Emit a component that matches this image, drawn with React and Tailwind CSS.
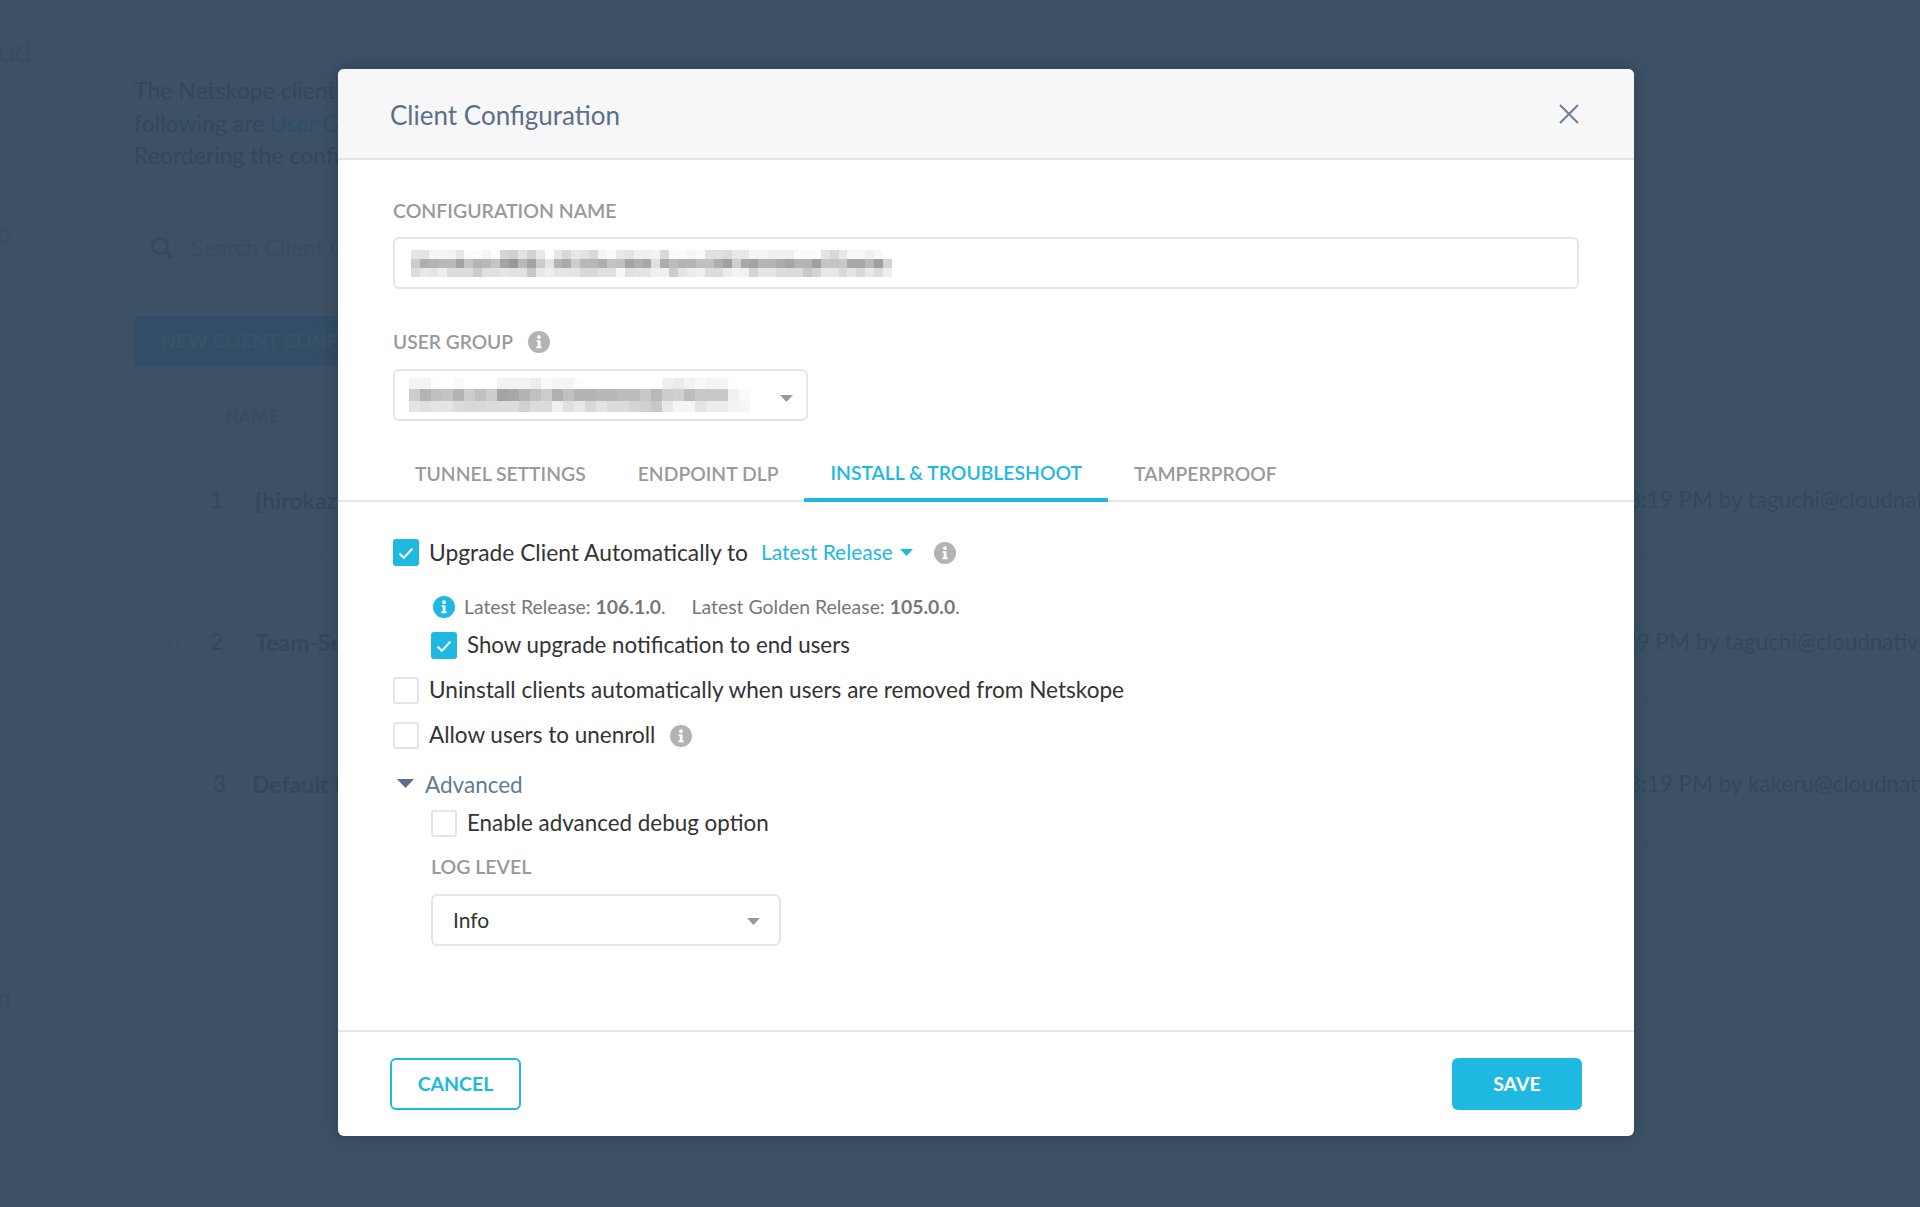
import React from "react";

const nameMosaic = [
  "e4 e4 f5 f5 f3 e6 fc fb f5 fe d4 d0 e2 d2 e8 ff e8 d8 e8 e2 d8 f4 fb e8 e4 f0 f0 f4 d8 fb fa f4 fb e0 e0 dc e8 e8 f6 f4 f0 f0 f0 fb fb fb e4 d8 e8 f8 f8 f0 f8 ff",
  "cc ae b4 b8 b8 a2 c4 b4 b8 c4 a4 98 b8 a4 cc e4 b4 aa cc b8 b8 ae c4 c0 a4 b0 a8 e0 ac bc b4 b4 c0 c0 ae a0 d0 a8 a4 b4 b4 ac a4 b4 b4 a0 c4 c4 c8 a8 a8 b8 a0 d4",
  "dc e8 e4 ee dc dc dc cc e0 e0 e6 e2 e2 c8 e8 ee e6 e6 e4 d8 d8 e0 e0 f6 e0 e4 e4 f0 f0 cc e4 ec f0 dc dc ec f4 f2 d4 e4 e4 dc dc dc c8 d4 e8 e8 d8 e4 d8 e8 dc ee",
];

const groupMosaic = [
  "f4 f4 fe ff fa ff ff ff f2 f2 f2 ec fa f6 f4 fc ff ff ff ff ff ff ff f0 ea f2 f8 f4 f4 fe ff",
  "cc b4 c0 c4 b4 cc c0 cc a4 a8 b4 c0 cc b0 c0 b4 b4 b8 b8 bc bc c8 b8 cc d0 bc c8 c8 c8 f0 fa",
  "e4 e0 e4 e4 dc d8 d8 dc dc dc d0 dc dc f0 e0 e8 d8 e4 dc dc d4 d0 c8 e8 f4 f4 e4 ec ec f4 f6",
];

// redacted text, drawn as blocks
function Mosaic({ rows, cell, rowH }) {
  return (
    <div className="flex flex-col">
      {rows.map((row, i) => (
        <div key={i} className="flex">
          {row.split(" ").map((c, j) => (
            <div key={j} style={{ width: cell, height: rowH, background: "#" + c + c + c }} />
          ))}
        </div>
      ))}
    </div>
  );
}

function InfoIcon({ color = "#b3b3b3", size = 22 }) {
  return (
    <svg width={size} height={size} viewBox="0 0 22 22" className="shrink-0">
      <circle cx="11" cy="11" r="11" fill={color} />
      <circle cx="11" cy="6.2" r="1.9" fill="#fff" />
      <path d="M8.6 9.3h3.9v6.2h1.3v1.7H8.3v-1.7h1.4v-4.5H8.6z" fill="#fff" />
    </svg>
  );
}

function Caret({ className, w = 13, h = 7, color = "#999" }) {
  return (
    <svg width={w} height={h} viewBox="0 0 13 7" className={className}>
      <path d="M0 0h13L6.5 7z" fill={color} />
    </svg>
  );
}

function Checkbox({ checked }) {
  if (checked) {
    return (
      <div className="flex h-[27px] w-[26px] shrink-0 items-center justify-center rounded-[3px] bg-[#1eb8e0]">
        <svg width="16" height="14" viewBox="0 0 16 14">
          <path d="M1.5 7.5l4.3 4.4L14.5 2.5" fill="none" stroke="#fff" strokeWidth="2" />
        </svg>
      </div>
    );
  }
  return <div className="h-[27px] w-[26px] shrink-0 rounded-[3px] border-2 border-[#e5e5e5] bg-white" />;
}

function CheckRow({ checked, label, top, size = "text-[22.5px]", children }) {
  return (
    <div className={`flex h-[27px] items-center ${top}`}>
      <Checkbox checked={checked} />
      <span className={`ml-[10px] whitespace-nowrap pb-[1px] text-[#333] ${size}`}>{label}</span>
      {children}
    </div>
  );
}

function DragDots() {
  return (
    <div className="grid w-[13px] grid-cols-2 gap-x-[7px] gap-y-[4px]">
      {[0, 1, 2, 3, 4, 5].map((i) => (
        <div key={i} className="h-[3px] w-[3px] bg-[#364d62]" />
      ))}
    </div>
  );
}

function BackgroundRow({ num, name, right, nameW, numClass, dots }) {
  return (
    <div className="flex h-[142px] items-start border-b border-[#394e63] pt-[67px] text-[22.5px] leading-[32px] text-[#31485c]">
      <div className="ml-[33px] flex h-[32px] w-[27px] shrink-0 items-center">{dots && <DragDots />}</div>
      <div className={`shrink-0 ${numClass}`}>{num}</div>
      <div className="shrink-0 text-[23px] font-bold" style={{ width: nameW }}>{name}</div>
      <div className="shrink-0">{right}</div>
    </div>
  );
}

function Background() {
  return (
    <div className="flex h-full w-full whitespace-nowrap">
      <div className="w-[82px] shrink-0 border-r border-[#394e63] text-[#354c61]">
        <div className="-ml-[46px] mt-[32px] text-[30px] leading-[36px]">Cloud</div>
        <div className="mt-[155px] flex h-[24px] items-center gap-[8px] text-[20px]">
          <span className="-ml-[3px] w-[15px] overflow-hidden">G</span>
          <span className="h-px w-[26px] bg-[#394e63]" />
        </div>
        <div className="mt-[404px] flex h-[24px] items-center gap-[8px] text-[20px]">
          <span className="-ml-[8px] w-[10px] overflow-hidden">r</span>
          <span className="ml-[4px] h-px w-[34px] bg-[#394e63]" />
        </div>
        <div className="-ml-[16px] mt-[308px] text-[24px] leading-[28px]">on</div>
      </div>
      <div className="flex-1 pl-[52px]">
        <div className="mt-[74px] text-[23px] leading-[32.5px] text-[#31485c]">
          <div>The Netskope client is configured</div>
          <div>following are <span className="text-[#2f4d68]">User Groups</span></div>
          <div>Reordering the configurations</div>
        </div>
        <div className="mt-[51px] flex h-[50px] w-[500px] items-center rounded-[4px] border border-[#3a4f64] pl-[15px]">
          <svg width="24" height="24" viewBox="0 0 24 24" className="shrink-0">
            <circle cx="10" cy="10" r="7.5" fill="none" stroke="#334a5f" strokeWidth="3" />
            <path d="M15.5 15.5L22 22" stroke="#334a5f" strokeWidth="3.5" />
          </svg>
          <span className="ml-[17px] text-[23px] text-[#354c61]">Search Client Configurations</span>
        </div>
        <div className="mt-[43px] flex h-[50px] w-[400px] items-center rounded-[4px] bg-[#324d66] pl-[27px] text-[19.5px] font-bold text-[#3b5168]">
          NEW CLIENT CONFIGURATION
        </div>
        <div className="mt-[38px] pl-[91px] text-[18px] font-bold leading-[24px] text-[#354c61]">NAME</div>
        <div className="-mt-[11px]">
          <BackgroundRow dots num="1" numClass="w-[61px] pl-[16px]" name="[hirokazu]" right="8:19 PM by taguchi@cloudnativeinc.com" nameW={1373} />
          <BackgroundRow dots num="2" numClass="w-[61px] pl-[16px]" name="Team-Setting" right="3:29 PM by taguchi@cloudnativeinc.com" nameW={1350} />
          <BackgroundRow num="3" numClass="w-[58px] pl-[19px]" name="Default tenant" right="8:19 PM by kakeru@cloudnativeinc.com" nameW={1376} />
        </div>
      </div>
    </div>
  );
}

const tabs = [
  { label: "TUNNEL SETTINGS" },
  { label: "ENDPOINT DLP" },
  { label: "INSTALL & TROUBLESHOOT", active: true },
  { label: "TAMPERPROOF" },
];

export default function App() {
  return (
    <div className="relative h-[1207px] w-[1920px] overflow-hidden bg-[#3c5166] font-['Lato',sans-serif]">
      <Background />

      <div className="absolute inset-0 flex justify-center pl-[52px] pt-[69px]">
        <div className="flex h-[1067px] w-[1296px] flex-col overflow-hidden rounded-[6px] bg-white shadow-[0_0_20px_rgba(0,0,0,0.2)]">
          <div className="flex h-[91px] shrink-0 items-center justify-between border-b-2 border-[#e5e5e5] bg-[#f7f7f7] pl-[52px] pr-[55px]">
            <div className="pt-[3px] text-[26px] text-[#5a7089]">Client Configuration</div>
            <svg width="20" height="20" viewBox="0 0 20 20" className="mt-[1px]">
              <path d="M1 1l18 18M19 1L1 19" stroke="#6c8095" strokeWidth="2" />
            </svg>
          </div>

          <div className="flex-1">
            <div className="px-[55px]">
              <div className="mt-[39px] text-[19.5px] font-semibold leading-[24px] text-[#999]">CONFIGURATION NAME</div>
              <div className="mt-[14px] flex h-[52px] items-center rounded-[6px] border-2 border-[#e5e5e5] pl-[16px]">
                <Mosaic rows={nameMosaic} cell={8.92} rowH={9} />
              </div>

              <div className="mt-[41px] flex h-[24px] items-center text-[19.2px] font-semibold text-[#999]">
                USER GROUP
                <span className="ml-[15px]"><InfoIcon /></span>
              </div>
              <div className="relative mt-[15px] flex h-[52px] w-[415px] items-center rounded-[6px] border-2 border-[#e5e5e5] pl-[14px]">
                <Mosaic rows={groupMosaic} cell={11} rowH={11.5} />
                <Caret className="absolute right-[13px] top-[24px]" />
              </div>
            </div>

            <div className="mt-[28px] flex h-[53px] border-b-2 border-[#e5e5e5] pl-[51px]">
              {tabs.map((t) => (
                <div
                  key={t.label}
                  className={
                    t.active
                      ? "-mb-[2px] flex h-[53px] items-center border-b-4 border-[#1eb8e0] px-[26px] text-[19.35px] font-semibold text-[#1eb8e0]"
                      : "flex h-[51px] items-center px-[26px] text-[19.35px] font-semibold text-[#999]"
                  }
                >
                  <span className="-mt-[2px]">{t.label}</span>
                </div>
              ))}
            </div>

            <div className="px-[55px]">
              <CheckRow checked label="Upgrade Client Automatically to" size="text-[22.8px]" top="mt-[37px]">
                <span className="ml-[13px] pb-[1px] text-[21px] text-[#1eb8e0]">Latest Release</span>
                <Caret className="ml-[7px]" color="#1eb8e0" />
                <span className="ml-[21px]"><InfoIcon /></span>
              </CheckRow>

              <div className="ml-[40px] mt-[29px] flex h-[24px] items-center whitespace-nowrap text-[19.4px] text-[#777]">
                <InfoIcon color="#1eb8e0" />
                <span className="ml-[9px]">Latest Release: <b className="font-bold">106.1.0</b>.</span>
                <span className="ml-[26px]">Latest Golden Release: <b className="font-bold">105.0.0</b>.</span>
              </div>

              <div className="ml-[38px]">
                <CheckRow checked label="Show upgrade notification to end users" size="text-[22.3px]" top="mt-[13px]" />
              </div>

              <CheckRow label="Uninstall clients automatically when users are removed from Netskope" size="text-[22.6px]" top="mt-[18px]" />

              <CheckRow label="Allow users to unenroll" top="mt-[18px]">
                <span className="ml-[15px]"><InfoIcon /></span>
              </CheckRow>

              <div className="ml-[4px] mt-[21px] flex h-[30px] items-center">
                <Caret w={17} h={13} color="#5a7089" className="-mt-[3px]" />
                <span className="ml-[11px] text-[22.5px] text-[#5f7a95]">Advanced</span>
              </div>

              <div className="ml-[38px]">
                <CheckRow label="Enable advanced debug option" size="text-[22.4px]" top="mt-[10px]" />

                <div className="mt-[18px] text-[19.5px] font-semibold leading-[24px] text-[#999]">LOG LEVEL</div>

                <div className="relative mt-[15px] flex h-[52px] w-[350px] items-center rounded-[6px] border-2 border-[#e5e5e5] pl-[20px] text-[21px] text-[#333]">
                  Info
                  <Caret className="absolute right-[19px] top-[22px]" />
                </div>
              </div>
            </div>
          </div>

          <div className="flex h-[106px] shrink-0 items-center justify-between border-t-2 border-[#e5e5e5] px-[52px]">
            <div className="flex h-[52px] w-[131px] items-center justify-center rounded-[6px] border-2 border-[#1eb8e0] text-[19.5px] font-bold text-[#1eb8e0]">
              CANCEL
            </div>
            <div className="flex h-[52px] w-[130px] items-center justify-center rounded-[6px] bg-[#1eb8e0] text-[19.5px] font-bold text-white">
              SAVE
            </div>
          </div>
        </div>
      </div>
    </div>
  );
}
